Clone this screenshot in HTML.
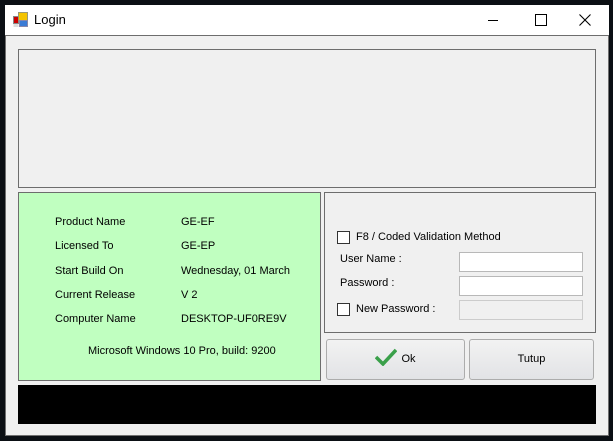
<!DOCTYPE html><html><head><style>
body{margin:0;width:613px;height:441px;background:#0b0f14;position:relative;overflow:hidden;font-family:"Liberation Sans",sans-serif;font-size:11px;color:#000}
.a{position:absolute}
.win{left:5px;top:5px;width:604px;height:431px;background:#f0f0f0;border:1px solid #707070;box-sizing:border-box}
.tb{left:5px;top:5px;width:604px;height:31px;background:#fff;border-bottom:1px solid #6d6d6d;box-sizing:border-box}
.pn{border:1px solid #6d6d6d;box-sizing:border-box}
.tx{border:1px solid #b8b8b8;background:#fff;box-sizing:border-box}
.cb{width:13px;height:13px;border:1px solid #333;background:#fff;box-sizing:border-box}
.bt{border:1px solid #acacac;border-radius:3px;background:linear-gradient(#f2f2f2,#e2e3e6);box-sizing:border-box;text-align:center;line-height:38px}
</style></head><body>
<div class="a win"></div>
<div class="a tb"></div>
<svg class="a" style="left:13px;top:12px" width="16" height="16"><rect x="0.5" y="4.5" width="5" height="7" fill="#c00" stroke="#888"/><rect x="5.5" y="0.5" width="9" height="8" fill="#f5c400" stroke="#997"/><rect x="6.5" y="8.5" width="8" height="6" fill="#3a7bd5" stroke="#88a"/><rect x="0.5" y="12" width="5" height="3" fill="#ddd"/></svg>
<div class="a" style="left:34px;top:12px;font-size:13px">Login</div>
<div class="a" style="left:488px;top:20px;width:10px;height:1px;background:#000"></div>
<div class="a" style="left:535px;top:14px;width:10px;height:10px;border:1px solid #000"></div>
<svg class="a" style="left:579px;top:14px" width="12" height="12"><path d="M0.5 0.5L11.5 11.5M11.5 0.5L0.5 11.5" stroke="#000" stroke-width="1.1"/></svg>
<div class="a pn" style="left:18px;top:49px;width:578px;height:139px"></div>
<div class="a pn" style="left:18px;top:192px;width:303px;height:189px;background:#c0ffc0"></div>
<div class="a" style="left:55px;top:210px;line-height:24.3px">Product Name<br>Licensed To<br>Start Build On<br>Current Release<br>Computer Name</div>
<div class="a" style="left:181px;top:210px;line-height:24.3px">GE-EF<br>GE-EP<br>Wednesday, 01 March<br>V 2<br>DESKTOP-UF0RE9V</div>
<div class="a" style="left:88px;top:345px">Microsoft Windows 10 Pro, build: 9200</div>
<div class="a pn" style="left:324px;top:192px;width:272px;height:141px"></div>
<div class="a cb" style="left:337px;top:231px"></div>
<div class="a" style="left:356px;top:231px">F8 / Coded Validation Method</div>
<div class="a" style="left:340px;top:253px">User Name :</div>
<div class="a" style="left:340px;top:277px">Password :</div>
<div class="a cb" style="left:337px;top:303px"></div>
<div class="a" style="left:356px;top:303px">New Password :</div>
<div class="a tx" style="left:459px;top:252px;width:124px;height:20px"></div>
<div class="a tx" style="left:459px;top:276px;width:124px;height:20px"></div>
<div class="a tx" style="left:459px;top:300px;width:124px;height:20px;background:#f0f0f0;border-color:#ccc"></div>
<div class="a bt" style="left:326px;top:339px;width:139px;height:41px"><svg style="vertical-align:middle;margin-right:4px;margin-top:-4px" width="22" height="18"><path d="M1 9L8 16L21 2" stroke="#3aa04a" stroke-width="3.5" fill="none"/></svg>Ok</div>
<div class="a bt" style="left:469px;top:339px;width:125px;height:41px">Tutup</div>
<div class="a" style="left:18px;top:385px;width:578px;height:39px;background:#000"></div>
</body></html>
